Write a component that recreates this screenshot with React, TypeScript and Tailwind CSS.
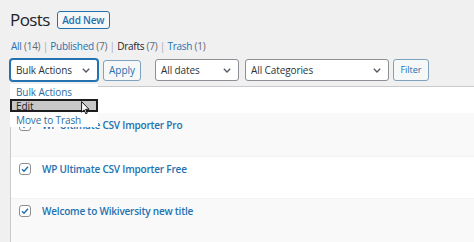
import React from "react";

function Chevron() {
  return (
    <svg width="8" height="5" viewBox="0 0 8 5" className="shrink-0">
      <path d="M0.8 0.8L4 4l3.2-3.2" fill="none" stroke="#50575e" strokeWidth="1.3" />
    </svg>
  );
}

function Select({ label, w, focused }: { label: string; w: string; focused?: boolean }) {
  return (
    <div
      className={`${w} h-[22px] flex items-center justify-between pl-[5px] pr-[7px] rounded-[3px] bg-white text-[10px] tracking-[-0.1px] whitespace-nowrap text-[#2c3338] border ${
        focused ? "border-[#2271b1] shadow-[0_0_0_1px_#2271b1]" : "border-[#8c8f94]"
      }`}
    >
      <span>{label}</span>
      <Chevron />
    </div>
  );
}

function Check() {
  return (
    <div className="w-[12px] h-[12px] rounded-[3px] border border-[#8c8f94] bg-white flex items-center justify-center shrink-0">
      <svg width="10" height="10" viewBox="0 0 10 10">
        <path d="M2 5.2l2 2 4-4.5" fill="none" stroke="#2271b1" strokeWidth="1.5" />
      </svg>
    </div>
  );
}

function Row({ title, bg, h }: { title: string; bg: string; h: string }) {
  return (
    <div className={`${bg} ${h} flex items-start pl-[8px] pt-[5px]`}>
      <div className="h-[14px] flex items-center">
        <Check />
      </div>
      <span className="ml-[11px] text-[10px] font-semibold tracking-[-0.2px] text-[#2271b1] leading-[14px] whitespace-nowrap">
        {title}
      </span>
    </div>
  );
}

export default function App() {
  return (
    <div className="w-[474px] h-[242px] overflow-hidden bg-[#f0f0f1] font-['Open_Sans',sans-serif] relative">
      <div className="flex items-center h-[24px] pl-[10px] mt-[8px]">
        <h1 className="text-[17px] leading-[24px] tracking-[-0.6px] text-[#1d2327]">Posts</h1>
        <div className="ml-[7px] h-[18px] w-[53px] flex items-center justify-center rounded-[3px] border border-[#2271b1] bg-[#f6f7f7] text-[10px] tracking-[-0.2px] font-semibold text-[#2271b1] whitespace-nowrap">
          Add New
        </div>
      </div>
      <div className="pl-[11px] mt-[7px] text-[10px] leading-[14px] tracking-[-0.25px] text-[#646970] whitespace-nowrap">
        <span className="text-[#2271b1]">All</span> (14) <span className="text-[#a7aaad]">|</span>{" "}
        <span className="text-[#2271b1]">Published</span> (7) <span className="text-[#a7aaad]">|</span>{" "}
        <span className="text-[#1d2327]">Drafts</span> (7) <span className="text-[#a7aaad]">|</span>{" "}
        <span className="text-[#2271b1]">Trash</span> (1)
      </div>
      <div className="flex items-center pl-[10px] mt-[6px]">
        <Select label="Bulk Actions" w="w-[88px]" focused />
        <div className="ml-[5px] w-[38px] h-[21px] flex items-center justify-center rounded-[3px] border border-[#7ea3bf] bg-[#f6f7f7] text-[10px] text-[#2271b1]">
          Apply
        </div>
        <div className="ml-[14px]">
          <Select label="All dates" w="w-[84px]" />
        </div>
        <div className="ml-[6px]">
          <Select label="All Categories" w="w-[144px]" />
        </div>
        <div className="ml-[4px] w-[36px] h-[22px] flex items-center justify-center rounded-[3px] border border-[#7ea3bf] bg-[#f6f7f7] text-[9px] text-[#2271b1]">
          Filter
        </div>
      </div>
      <div className="ml-[10px] mt-[5px] border-l border-t border-[#c9cacd] bg-white">
        <div className="h-[26px] bg-white" />
        <Row title="WP Ultimate CSV Importer Pro" bg="bg-[#f9f9f9]" h="h-[43px]" />
        <div className="h-[1px] bg-[#f3f3f3]" />
        <Row title="WP Ultimate CSV Importer Free" bg="bg-white" h="h-[41px]" />
        <div className="h-[1px] bg-[#f3f3f3]" />
        <Row title="Welcome to Wikiversity new title" bg="bg-[#f9f9f9]" h="h-[50px]" />
      </div>

      <div className="absolute left-[10px] top-[84px] w-[88px] h-[43px] bg-white text-[10px] leading-[14px] tracking-[-0.1px] whitespace-nowrap">
        <div className="h-[15px] pl-[6px] pt-[1px] text-[#2c6aa0]">Bulk Actions</div>
        <div className="h-[13px] pl-[4px] bg-[#c8c8c8] border-2 border-[#1d1d1d] flex items-center text-[#1d1d1d]">Edit</div>
        <div className="h-[15px] pl-[6px] text-[#2c6aa0] flex items-center">Move to Trash</div>
      </div>
      <svg className="absolute left-[81px] top-[101px]" width="9" height="14" viewBox="0 0 9 14">
        <path d="M0.6 0.6v10.6l2.5-2.3 1.7 3.9 1.5-.7-1.7-3.8h3.4z" fill="#fff" stroke="#000" strokeWidth="0.9" strokeLinejoin="round" />
      </svg>
    </div>
  );
}
